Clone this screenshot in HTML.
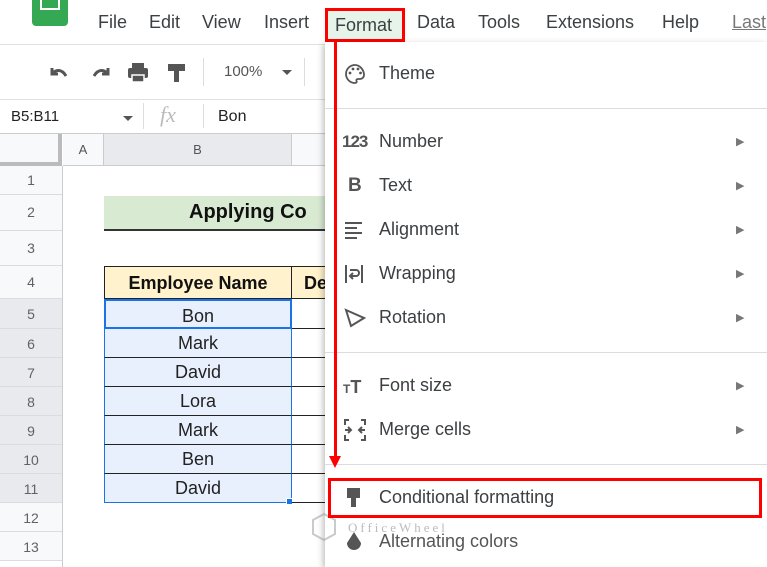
<!DOCTYPE html>
<html><head><meta charset="utf-8"><style>
*{margin:0;padding:0;box-sizing:border-box}
body{width:767px;height:567px;overflow:hidden;background:#fff;font-family:"Liberation Sans",Arial,sans-serif;position:relative;color:#3c4043}
.a{position:absolute}
.menu span{position:absolute;top:12px;font-size:18px;color:#3c4043}
.rh{position:absolute;left:0;width:62px;text-align:center;font-size:14px;color:#5f6368;border-bottom:1px solid #dadce0;background:#f8f9fa}
.cell{position:absolute;left:104px;width:188px;text-align:center;font-size:18px;color:#222;background:#e8f0fe;border-bottom:1px solid #222;border-left:1px solid #1a73e8;border-right:1px solid #1a73e8}
.c2{position:absolute;left:292px;width:40px;border-bottom:1px solid #222}
.mi{position:absolute;left:379px;font-size:18px;color:#3c4043}
.ar{position:absolute;left:736px;font-size:11px;color:#777}
.ic{position:absolute;left:344px}
.dv{position:absolute;left:325px;width:442px;height:1px;background:#dadce0}
</style></head><body>
<!-- logo -->
<div class="a" style="left:32px;top:0;width:36px;height:26px;background:#34a853;border-radius:0 0 4px 4px"></div>
<div class="a" style="left:40px;top:0;width:20px;height:10px;border:2px solid #fff;border-top:none"></div>
<div class="menu">
<span style="left:98px">File</span><span style="left:149px">Edit</span><span style="left:202px">View</span><span style="left:264px">Insert</span>
<span style="left:417px">Data</span><span style="left:478px">Tools</span><span style="left:546px">Extensions</span><span style="left:662px">Help</span><span style="left:732px;color:#777;text-decoration:underline">Last</span>
</div>
<div class="a" style="left:325px;top:8px;width:80px;height:34px;background:#e6f4ea;border:3px solid #f00;font-size:18px;padding:4px 0 0 7px">Format</div>
<div class="a" style="left:0;top:44px;width:325px;height:1px;background:#e0e0e0"></div>
<!-- toolbar -->
<svg class="a" style="left:48px;top:62px" width="64" height="20"><path d="M4 6v6h6M4 12c4-5 10-5 14 2" stroke="#555" stroke-width="3" fill="none"/><path d="M60 6v6h-6M60 12c-4-5-10-5-14 2" stroke="#555" stroke-width="3" fill="none"/></svg>
<svg class="a" style="left:126px;top:62px" width="60" height="22"><rect x="2" y="6" width="20" height="10" rx="2" fill="#555"/><rect x="6" y="1" width="12" height="5" fill="#555"/><rect x="6" y="13" width="12" height="7" fill="#555" stroke="#fff" stroke-width="1.5"/><rect x="42" y="2" width="17" height="7" fill="#555"/><rect x="48" y="9" width="5" height="11" fill="#555"/></svg>
<div class="a" style="left:203px;top:58px;width:1px;height:28px;background:#ddd"></div>
<div class="a" style="left:224px;top:63px;font-size:15px;color:#555">100%</div>
<div class="a" style="left:282px;top:70px;border:5px solid transparent;border-top:5px solid #555"></div>
<div class="a" style="left:304px;top:58px;width:1px;height:28px;background:#ddd"></div>
<div class="a" style="left:0;top:99px;width:325px;height:1px;background:#e0e0e0"></div>
<!-- name box -->
<div class="a" style="left:11px;top:108px;font-size:15px;color:#222">B5:B11</div>
<div class="a" style="left:123px;top:116px;border:5px solid transparent;border-top:5px solid #555"></div>
<div class="a" style="left:143px;top:103px;width:1px;height:26px;background:#ddd"></div>
<div class="a" style="left:160px;top:102px;font-size:22px;font-style:italic;color:#bbb;font-family:'Liberation Serif',serif">fx</div>
<div class="a" style="left:203px;top:104px;width:1px;height:24px;background:#ddd"></div>
<div class="a" style="left:218px;top:108px;font-size:16px;color:#222">Bon</div>
<div class="a" style="left:0;top:133px;width:325px;height:1px;background:#ccc"></div>
<!-- col headers -->
<div class="a" style="left:0;top:134px;width:62px;height:32px;background:#f8f9fa;border-right:4px solid #bbb;border-bottom:4px solid #bbb"></div>
<div class="a" style="left:63px;top:134px;width:41px;height:32px;background:#f8f9fa;border-right:1px solid #ccc;border-bottom:1px solid #ccc;text-align:center;font-size:13px;padding-top:8px;color:#555">A</div>
<div class="a" style="left:104px;top:134px;width:188px;height:32px;background:#e8eaed;border-right:1px solid #ccc;border-bottom:1px solid #ccc;text-align:center;font-size:13px;padding-top:8px;color:#555">B</div>
<div class="a" style="left:292px;top:134px;width:40px;height:32px;background:#f8f9fa;border-bottom:1px solid #ccc"></div>
<div class="a" style="left:62px;top:166px;width:1px;height:401px;background:#ccc"></div>
<!-- row headers -->
<div class="rh" style="top:166px;height:29px;padding-top:6px">1</div>
<div class="rh" style="top:195px;height:36px;padding-top:9px">2</div>
<div class="rh" style="top:231px;height:35px;padding-top:9px">3</div>
<div class="rh" style="top:266px;height:33px;padding-top:8px">4</div>
<div class="rh" style="top:299px;height:30px;padding-top:7px;background:#e8eaed">5</div>
<div class="rh" style="top:329px;height:29px;padding-top:7px;background:#e8eaed">6</div>
<div class="rh" style="top:358px;height:29px;padding-top:7px;background:#e8eaed">7</div>
<div class="rh" style="top:387px;height:29px;padding-top:7px;background:#e8eaed">8</div>
<div class="rh" style="top:416px;height:29px;padding-top:7px;background:#e8eaed">9</div>
<div class="rh" style="top:445px;height:29px;padding-top:7px;background:#e8eaed">10</div>
<div class="rh" style="top:474px;height:29px;padding-top:7px;background:#e8eaed">11</div>
<div class="rh" style="top:503px;height:29px;padding-top:7px">12</div>
<div class="rh" style="top:532px;height:29px;padding-top:7px">13</div>
<!-- title -->
<div class="a" style="left:104px;top:196px;width:228px;height:35px;background:#d9ead3;border-bottom:2px solid #333;font-size:20px;font-weight:bold;color:#111;padding:5px 0 0 85px;white-space:nowrap;overflow:hidden">Applying Co</div>
<!-- table -->
<div class="a" style="left:104px;top:266px;width:188px;height:33px;background:#fff2cc;border:1px solid #222;font-size:18px;font-weight:bold;color:#111;text-align:center;padding-top:6px">Employee Name</div>
<div class="a" style="left:292px;top:266px;width:40px;height:33px;background:#fff2cc;border-top:1px solid #222;border-bottom:1px solid #222;font-size:18px;font-weight:bold;color:#111;padding:6px 0 0 12px;overflow:hidden">De</div>
<div class="cell" style="top:299px;height:30px;padding-top:5px;border:2px solid #1a73e8">Bon</div>
<div class="cell" style="top:329px;height:29px;padding-top:4px">Mark</div>
<div class="cell" style="top:358px;height:29px;padding-top:4px">David</div>
<div class="cell" style="top:387px;height:29px;padding-top:4px">Lora</div>
<div class="cell" style="top:416px;height:29px;padding-top:4px">Mark</div>
<div class="cell" style="top:445px;height:29px;padding-top:4px">Ben</div>
<div class="cell" style="top:474px;height:29px;padding-top:4px;border-bottom:1px solid #1a73e8">David</div>
<div class="a" style="left:286px;top:498px;width:7px;height:7px;background:#1a73e8;border:1px solid #fff"></div>
<div class="c2" style="top:299px;height:30px"></div><div class="c2" style="top:329px;height:29px"></div><div class="c2" style="top:358px;height:29px"></div><div class="c2" style="top:387px;height:29px"></div><div class="c2" style="top:416px;height:29px"></div><div class="c2" style="top:445px;height:29px"></div><div class="c2" style="top:474px;height:29px"></div>
<!-- menu panel -->
<div class="a" style="left:325px;top:42px;width:442px;height:525px;background:#fff;box-shadow:-2px 2px 6px rgba(0,0,0,.25)"></div>
<div class="dv" style="top:108px"></div><div class="dv" style="top:352px"></div><div class="dv" style="top:464px"></div>
<svg class="ic" style="top:63px" width="22" height="22" viewBox="0 0 22 22"><path d="M11 2a9 9 0 0 0 0 18c1.5 0 2-1 1.5-2s0-2 1.5-2h2a4 4 0 0 0 4-4c0-5-4-10-9-10z" fill="none" stroke="#555" stroke-width="1.8"/><circle cx="6" cy="10" r="1.4" fill="#555"/><circle cx="9" cy="6" r="1.4" fill="#555"/><circle cx="14" cy="6" r="1.4" fill="#555"/><circle cx="16.5" cy="10" r="1.4" fill="#555"/></svg>
<div class="mi" style="top:63px">Theme</div>
<div class="a" style="left:342px;top:132px;font-size:17px;font-weight:bold;color:#555;letter-spacing:-1px">123</div>
<div class="mi" style="top:131px">Number</div><div class="ar" style="top:135px">▶</div>
<div class="a" style="left:348px;top:175px;font-size:19px;font-weight:bold;color:#555">B</div>
<div class="mi" style="top:175px">Text</div><div class="ar" style="top:179px">▶</div>
<svg class="ic" style="top:220px" width="20" height="20"><path d="M1 3h17M1 8h12M1 13h17M1 18h12" stroke="#555" stroke-width="2"/></svg>
<div class="mi" style="top:219px">Alignment</div><div class="ar" style="top:223px">▶</div>
<svg class="ic" style="top:264px" width="20" height="20"><path d="M2 1v18M18 1v18M6 6h6a3 3 0 0 1 0 6H7M9 9l-3 3 3 3" stroke="#555" stroke-width="2" fill="none"/></svg>
<div class="mi" style="top:263px">Wrapping</div><div class="ar" style="top:267px">▶</div>
<svg class="ic" style="top:308px" width="22" height="20"><path d="M2 2l5 16 13-8z" stroke="#555" stroke-width="2" fill="none"/></svg>
<div class="mi" style="top:307px">Rotation</div><div class="ar" style="top:311px">▶</div>
<div class="a" style="left:343px;top:377px;font-size:18px;font-weight:bold;color:#555"><span style="font-size:12px">T</span>T</div>
<div class="mi" style="top:375px">Font size</div><div class="ar" style="top:379px">▶</div>
<svg class="ic" style="top:419px" width="22" height="22"><path d="M1 6V1h4M17 1h4v5M1 16v5h4M17 21h4v-5M1 11h6M4 8l3 3-3 3M21 11h-6M18 8l-3 3 3 3" stroke="#555" stroke-width="2" fill="none"/></svg>
<div class="mi" style="top:419px">Merge cells</div><div class="ar" style="top:423px">▶</div>
<svg class="ic" style="top:487px" width="20" height="22"><rect x="3" y="1" width="13" height="10" fill="#555"/><rect x="7" y="11" width="5" height="9" fill="#555"/></svg>
<div class="mi" style="top:487px">Conditional formatting</div>
<svg class="ic" style="top:531px" width="20" height="22"><path d="M10 1L3 12a7 7 0 0 0 14 0z" fill="#555"/></svg>
<div class="mi" style="top:531px;color:#555">Alternating colors</div>
<div class="a" style="left:348px;top:520px;font-size:13px;letter-spacing:3px;color:rgba(120,120,120,.5);font-family:'Liberation Serif',serif">OfficeWheel</div>
<svg class="a" style="left:310px;top:512px" width="28" height="30"><path d="M14 2l11 6v14l-11 6-11-6V8z" fill="none" stroke="rgba(150,150,150,.5)" stroke-width="2"/></svg>
<!-- red annotations -->
<div class="a" style="left:328px;top:478px;width:434px;height:40px;border:3px solid #f00"></div>
<div class="a" style="left:334px;top:42px;width:3px;height:418px;background:#f00"></div>
<div class="a" style="left:329px;top:456px;border-left:6px solid transparent;border-right:6px solid transparent;border-top:12px solid #f00"></div>
</body></html>
